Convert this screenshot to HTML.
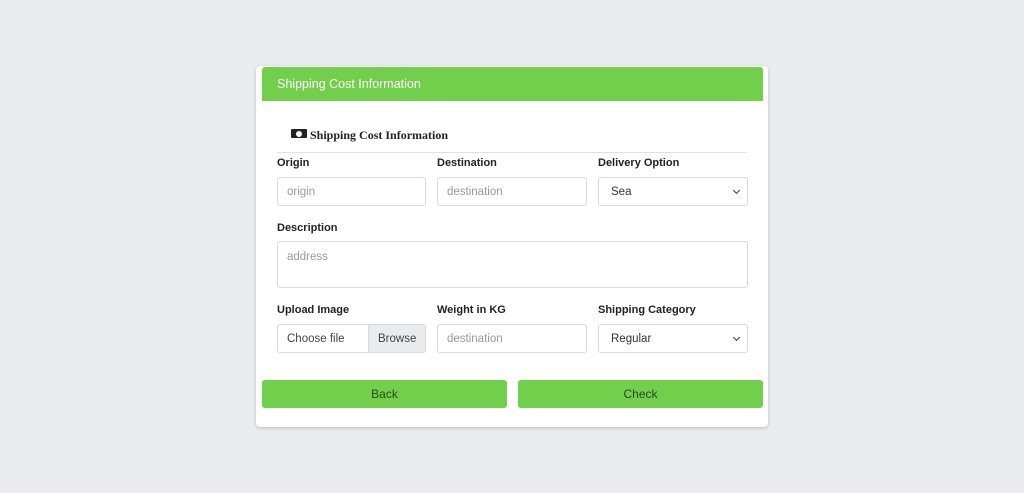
<!DOCTYPE html>
<html><head><meta charset="utf-8"><style>
*{box-sizing:border-box;margin:0;padding:0}
body{width:1024px;height:493px;background:#e9ebee;font-family:"Liberation Sans",sans-serif;position:relative;overflow:hidden}
.card{position:absolute;left:256px;top:66px;width:512px;height:361px;background:#fff;border-radius:4px;box-shadow:0 1px 3px rgba(0,0,0,.2)}
.hdr{position:absolute;left:262px;top:67px;width:501px;height:34px;background:#72cf4c;color:#fff;font-size:12.5px;line-height:34px;padding-left:15px;border-radius:3px 3px 0 0}
.t{position:absolute;font-size:11px;font-weight:bold;color:#222}
.in{position:absolute;height:29px;border:1px solid #d6dadf;border-radius:3px;font-size:11.5px;color:#999;line-height:29px;padding-left:9px;background:#fff}
.sel{color:#333;padding-left:12px}
.sel:after{content:"";position:absolute;right:8px;top:10px;width:4px;height:4px;border-right:1.5px solid #333;border-bottom:1.5px solid #333;transform:rotate(45deg)}
.btn{position:absolute;top:380px;height:28px;background:#72cf4c;border-radius:3px;font-size:12px;color:#2a4a1e;text-align:center;line-height:29px}
</style></head><body>
<div class="card"></div>
<div class="hdr">Shipping Cost Information</div>
<div style="position:absolute;left:291px;top:129px;width:16px;height:9px;background:#222;border-radius:1px"><div style="position:absolute;left:5px;top:1.5px;width:6px;height:6px;border-radius:50%;background:#fff"></div></div>
<div style="position:absolute;left:310px;top:128px;font-family:'Liberation Serif',serif;font-weight:bold;font-size:12px;color:#222">Shipping Cost Information</div>
<div style="position:absolute;left:277px;top:152px;width:470px;height:1px;background:#dee2e6"></div>
<div class="t" style="left:277px;top:157px">Origin</div>
<div class="t" style="left:437px;top:157px">Destination</div>
<div class="t" style="left:598px;top:157px">Delivery Option</div>
<div class="in" style="left:277px;top:177px;width:149px">origin</div>
<div class="in" style="left:437px;top:177px;width:150px">destination</div>
<div class="in sel" style="left:598px;top:177px;width:150px">Sea</div>
<div class="t" style="left:277px;top:222px">Description</div>
<div class="in" style="left:277px;top:241px;width:471px;height:47px;line-height:1;padding-top:10px">address</div>
<div class="t" style="left:277px;top:304px">Upload Image</div>
<div class="t" style="left:437px;top:304px">Weight in KG</div>
<div class="t" style="left:598px;top:304px">Shipping Category</div>
<div class="in" style="left:277px;top:324px;width:149px;color:#444">Choose file<div style="position:absolute;right:0;top:0;width:57px;height:27px;background:#e9ecef;border-left:1px solid #d6dadf;padding-left:9px;color:#444;line-height:29px">Browse</div></div>
<div class="in" style="left:437px;top:324px;width:150px">destination</div>
<div class="in sel" style="left:598px;top:324px;width:150px">Regular</div>
<div class="btn" style="left:262px;width:245px">Back</div>
<div class="btn" style="left:518px;width:245px">Check</div>
</body></html>
